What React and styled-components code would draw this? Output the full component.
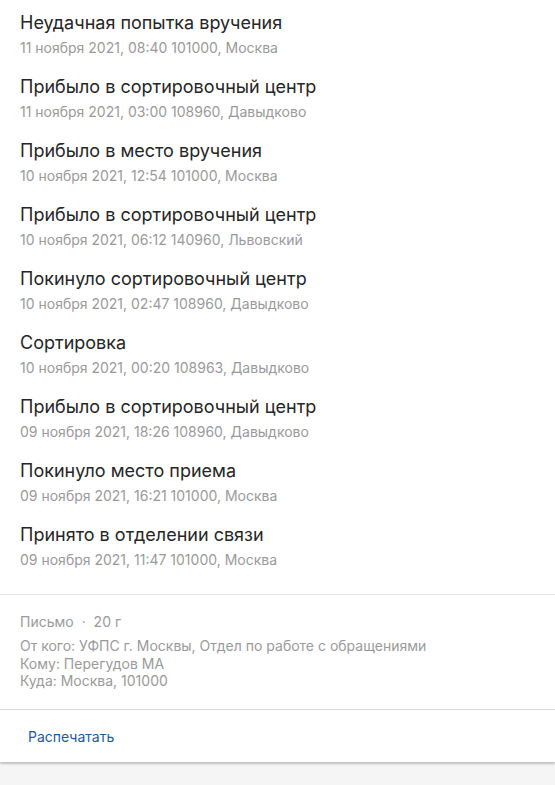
import React from "react";
import styled, { createGlobalStyle } from "styled-components";

const events = [
  { title: "Неудачная попытка вручения", info: "11 ноября 2021, 08:40 101000, Москва" },
  { title: "Прибыло в сортировочный центр", info: "11 ноября 2021, 03:00 108960, Давыдково" },
  { title: "Прибыло в место вручения", info: "10 ноября 2021, 12:54 101000, Москва" },
  { title: "Прибыло в сортировочный центр", info: "10 ноября 2021, 06:12 140960, Львовский" },
  { title: "Покинуло сортировочный центр", info: "10 ноября 2021, 02:47 108960, Давыдково" },
  { title: "Сортировка", info: "10 ноября 2021, 00:20 108963, Давыдково" },
  { title: "Прибыло в сортировочный центр", info: "09 ноября 2021, 18:26 108960, Давыдково" },
  { title: "Покинуло место приема", info: "09 ноября 2021, 16:21 101000, Москва" },
  { title: "Принято в отделении связи", info: "09 ноября 2021, 11:47 101000, Москва" },
];

export default function App() {
  return (
    <>
      <GlobalStyle />
      <Card>
        <History>
          {events.map((e, i) => (
            <Event key={i}>
              <EventTitle>{e.title}</EventTitle>
              <EventInfo>{e.info}</EventInfo>
            </Event>
          ))}
        </History>
        <Details>
          <Meta>
            Письмо <Dot>·</Dot> 20 г
          </Meta>
          <DetailLines>
            <div>От кого: УФПС г. Москвы, Отдел по работе с обращениями</div>
            <div>Кому: Перегудов МА</div>
            <div>Куда: Москва, 101000</div>
          </DetailLines>
        </Details>
        <Actions>
          <PrintLink href="#">Распечатать</PrintLink>
        </Actions>
      </Card>
    </>
  );
}

const GlobalStyle = createGlobalStyle`
  html, body {
    margin: 0;
    padding: 0;
    background: #f5f5f5;
    font-family: Inter, "Noto Sans", sans-serif;
    min-height: 785px;
  }
`;

const Card = styled.div`
  background: #fff;
  padding-top: 1px;
  box-shadow: 0 2px 2px rgba(0, 0, 0, 0.22);
`;

const History = styled.div`
  padding-bottom: 17px;
`;

const Event = styled.div`
  padding: 10px 20px 7px;
`;

const EventTitle = styled.div`
  font-size: 18px;
  line-height: 24px;
  color: #262626;
`;

const EventInfo = styled.div`
  margin-top: 3px;
  font-size: 14px;
  line-height: 20px;
  color: #9a9a9a;
`;

const Details = styled.div`
  border-top: 1px solid #e4e4e4;
  border-bottom: 1px solid #d8d8d8;
  padding: 17px 20px 19px;
  color: #9a9a9a;
  font-size: 14px;
`;

const Meta = styled.div`
  line-height: 20px;
`;

const Dot = styled.span`
  margin: 0 4px;
`;

const DetailLines = styled.div`
  margin-top: 5px;
  line-height: 17.5px;
`;

const Actions = styled.div`
  padding: 16px 28px 15px;
`;

const PrintLink = styled.a`
  font-size: 14px;
  line-height: 20px;
  color: #1a5aa6;
  text-decoration: none;
`;
